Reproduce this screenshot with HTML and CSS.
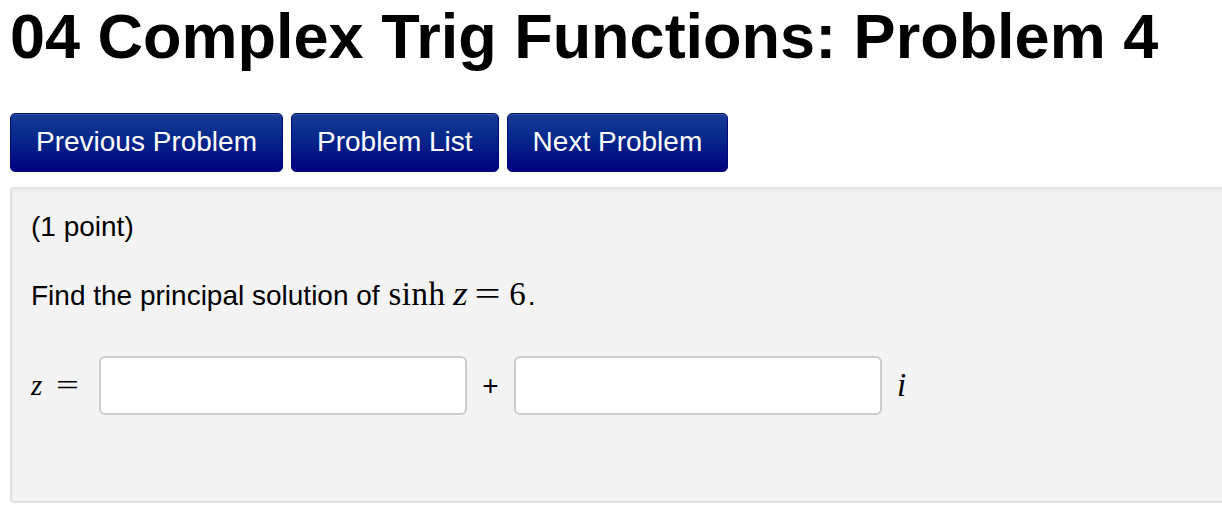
FILE: index.html
```html
<!DOCTYPE html>
<html>
<head>
<meta charset="utf-8">
<link rel="stylesheet" href="styles.css">
</head>
<body>
<h1 class="title">04 Complex Trig Functions: Problem 4</h1>
<div class="nav">
  <a class="btn">Previous Problem</a>
  <a class="btn">Problem List</a>
  <a class="btn">Next Problem</a>
</div>
<div class="panel">
  <p class="points">(1 point)</p>
  <p class="question">Find the principal solution of <span class="math"><span class="fn">sinh</span><span class="var zq">z</span><span class="eq">=</span><span class="num">6</span></span><span class="dot">.</span></p>
  <div class="answer">
    <span class="math lhs"><span class="var za">z</span><span class="eq eqa">=</span></span>
    <input class="field" type="text">
    <span class="plus">+</span>
    <input class="field" type="text">
    <span class="math imag"><span class="var">i</span></span>
  </div>
</div>
</body>
</html>
```
FILE: styles.css
```css
html, body {
  margin: 0;
  padding: 0;
  background: #ffffff;
}
body {
  font-family: "Liberation Sans", Arial, sans-serif;
  color: #000;
  padding-left: 10px;
  overflow: hidden;
}
.title {
  margin: 0;
  font-size: 63px;
  font-weight: bold;
  line-height: 72px;
  white-space: nowrap;
}
.nav {
  display: flex;
  gap: 8px;
  margin-top: 41px;
}
.btn {
  display: block;
  font-size: 28px;
  line-height: 32px;
  color: #fff;
  padding: 12px 25px 13px 25px;
  border: 1px solid #000a6e;
  border-radius: 5px;
  background: linear-gradient(to bottom, #173a95 0%, #062a8c 40%, #000080 100%);
  box-shadow: inset 0 1px 0 rgba(255,255,255,0.15);
  white-space: nowrap;
}
.panel {
  margin-top: 15px;
  margin-right: -20px;
  background: #f3f3f3;
  border: 2px solid #e0e0e0;
  border-top: none;
  border-radius: 4px;
  box-shadow: inset 0 4px 4px -2px #dcdcdc;
  padding: 22px 19px 86px 19px;
  font-size: 28px;
}
.points {
  margin: 0;
  line-height: 36px;
}
.question {
  margin: 31px 0 0 0;
  line-height: 36px;
}
.math {
  font-family: "Liberation Serif", "DejaVu Serif", serif;
  font-size: 33px;
}
.fn {
  letter-spacing: 0.5px;
  margin-left: 1px;
}
.var {
  font-style: italic;
}
.zq {
  display: inline-block;
  margin-left: 9px;
  transform: scaleX(1.15);
}
.eq {
  display: inline-block;
  width: 17px;
  text-align: center;
  transform: scaleX(1.4);
  margin: 0 14px 0 11px;
}
.num {
  display: inline-block;
}
.dot {
  margin-left: 2px;
}
.answer {
  display: flex;
  align-items: center;
  margin-top: 42px;
}
.lhs {
  margin-left: 0;
  margin-right: 0;
  font-size: 29px;
  display: flex;
  align-items: center;
  width: 68px;
}
.za {
  display: inline-block;
}
.eqa {
  margin: 0 0 0 17px;
}
.field {
  width: 364px;
  height: 55px;
  box-sizing: content-box;
  border: 2px solid #cccccc;
  border-radius: 6px;
  background: #fff;
  padding: 0;
  margin: 0;
}
.plus {
  font-size: 28px;
  width: 47px;
  text-align: center;
}
.imag {
  margin-left: 15px;
}
```
